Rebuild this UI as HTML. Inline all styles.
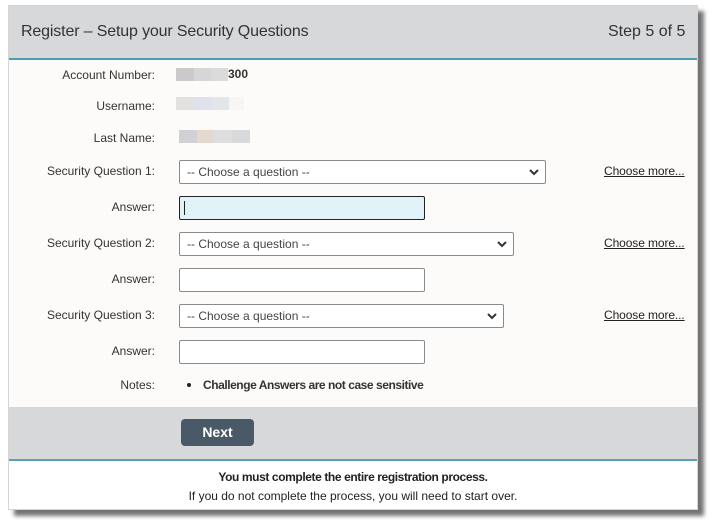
<!DOCTYPE html>
<html><head><meta charset="utf-8"><style>
*{margin:0;padding:0;box-sizing:border-box}
body{width:721px;height:525px;background:#fff;position:relative;font-family:"Liberation Sans",Arial,sans-serif;color:#222;overflow:hidden}
.abs{position:absolute}
.frame{left:8px;top:5px;width:690px;height:505px;border:1px solid #d4d4d4;box-shadow:6px 6px 4px rgba(0,0,0,.55);background:#fff}
.lbl{position:absolute;right:566px;font-size:12px;color:#333;text-align:right;white-space:nowrap}
.box{position:absolute;left:179px;height:24px;border:1px solid #8a8a8a;border-radius:2px;background:#fff}
.sel{font-size:12px;color:#444;padding:4px 0 0 7px}
.chev{position:absolute;right:6px;top:7px}
.more{position:absolute;left:604px;font-size:12px;color:#222;text-decoration:underline;letter-spacing:-0.1px}
.blk{position:absolute;height:13px}
</style></head><body>
<div class="abs frame"></div>
<div class="abs" style="left:9px;top:6px;width:688px;height:52px;background:#d7d8da"></div>
<div class="abs" style="left:9px;top:58px;width:688px;height:2px;background:#4e9bb2"></div>
<div class="abs" style="left:21px;top:23px;font-size:16px;color:#333;letter-spacing:-0.15px">Register – Setup your Security Questions</div>
<div class="abs" style="left:608px;top:23px;font-size:16px;color:#333">Step 5 of 5</div>
<div class="abs" style="left:9px;top:60px;width:688px;height:347px;background:#fcfbf9"></div>

<div class="lbl" style="top:68px">Account Number:</div>
<div class="blk" style="left:176px;top:68px;width:52px;background:linear-gradient(90deg,#cbc9cb 0 18px,#d6d5d8 18px 35px,#dcdbdc 35px)"></div>
<div class="abs" style="left:228px;top:67px;font-size:12px;font-weight:bold;color:#333">300</div>
<div class="lbl" style="top:99px">Username:</div>
<div class="blk" style="left:176px;top:97px;width:68px;background:linear-gradient(90deg,#e3e1e0 0 18px,#dfe2ec 18px 36px,#e2e5e9 36px 53px,#f8f6f3 53px)"></div>
<div class="lbl" style="top:131px">Last Name:</div>
<div class="blk" style="left:179px;top:130px;width:71px;background:linear-gradient(90deg,#cfd1d4 0 18px,#e5d9cf 18px 35px,#dedede 35px 53px,#d8d9da 53px)"></div>

<div class="lbl" style="top:164px">Security Question 1:</div>
<div class="box sel" style="top:160px;width:367px">-- Choose a question --<svg class="chev" width="10" height="8" viewBox="0 0 10 8"><path d="M1 2l4 4 4-4" fill="none" stroke="#333" stroke-width="2"/></svg></div>
<div class="more" style="top:164px">Choose more...</div>
<div class="lbl" style="top:200px">Answer:</div>
<div class="box" style="top:196px;width:246px;background:#e1f2f8;border-color:#222"><div class="abs" style="left:4px;top:4px;width:1px;height:14px;background:#222"></div></div>

<div class="lbl" style="top:236px">Security Question 2:</div>
<div class="box sel" style="top:232px;width:335px">-- Choose a question --<svg class="chev" width="10" height="8" viewBox="0 0 10 8"><path d="M1 2l4 4 4-4" fill="none" stroke="#333" stroke-width="2"/></svg></div>
<div class="more" style="top:236px">Choose more...</div>
<div class="lbl" style="top:272px">Answer:</div>
<div class="box" style="top:268px;width:246px"></div>

<div class="lbl" style="top:308px">Security Question 3:</div>
<div class="box sel" style="top:304px;width:325px">-- Choose a question --<svg class="chev" width="10" height="8" viewBox="0 0 10 8"><path d="M1 2l4 4 4-4" fill="none" stroke="#333" stroke-width="2"/></svg></div>
<div class="more" style="top:308px">Choose more...</div>
<div class="lbl" style="top:344px">Answer:</div>
<div class="box" style="top:340px;width:246px"></div>

<div class="lbl" style="top:378px">Notes:</div>
<div class="abs" style="left:187px;top:383px;width:4px;height:4px;border-radius:50%;background:#222"></div>
<div class="abs" style="left:203px;top:378px;font-size:12px;font-weight:bold;color:#333;letter-spacing:-0.45px">Challenge Answers are not case sensitive</div>

<div class="abs" style="left:9px;top:407px;width:688px;height:52px;background:#d7d8da"></div>
<div class="abs" style="left:181px;top:419px;width:73px;height:27px;background:#4a5968;border-radius:4px;color:#fff;font-size:14px;font-weight:bold;text-align:center;line-height:27px">Next</div>
<div class="abs" style="left:9px;top:459px;width:688px;height:2px;background:#5a9fb2"></div>
<div class="abs" style="left:9px;top:470px;width:688px;text-align:center;font-size:12px;font-weight:bold;color:#222;letter-spacing:-0.4px">You must complete the entire registration process.</div>
<div class="abs" style="left:9px;top:489px;width:688px;text-align:center;font-size:12px;color:#222">If you do not complete the process, you will need to start over.</div>
</body></html>
